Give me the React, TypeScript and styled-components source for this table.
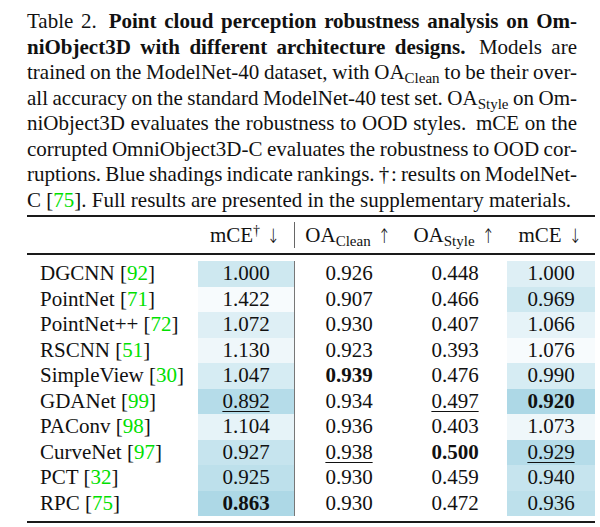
import { createGlobalStyle, styled } from 'styled-components';

const GlobalStyle = createGlobalStyle`
    body {
        margin: 0;
        background: #fff;
        color: #111;
        font-family: "Liberation Serif", "Times New Roman", serif;
    }
`;

type Row = { name: string; cite: string; vals: number[] };

const rows: Row[] = [
    { name: 'DGCNN', cite: '92', vals: [1.0, 0.926, 0.448, 1.0] },
    { name: 'PointNet', cite: '71', vals: [1.422, 0.907, 0.466, 0.969] },
    { name: 'PointNet++', cite: '72', vals: [1.072, 0.93, 0.407, 1.066] },
    { name: 'RSCNN', cite: '51', vals: [1.13, 0.923, 0.393, 1.076] },
    { name: 'SimpleView', cite: '30', vals: [1.047, 0.939, 0.476, 0.99] },
    { name: 'GDANet', cite: '99', vals: [0.892, 0.934, 0.497, 0.92] },
    { name: 'PAConv', cite: '98', vals: [1.104, 0.936, 0.403, 1.073] },
    { name: 'CurveNet', cite: '97', vals: [0.927, 0.938, 0.5, 0.929] },
    { name: 'PCT', cite: '32', vals: [0.925, 0.93, 0.459, 0.94] },
    { name: 'RPC', cite: '75', vals: [0.863, 0.93, 0.472, 0.936] },
];

// lower is better for the mCE columns, higher for the OA ones
const lowerBetter = [true, false, false, true];
const shaded = [true, false, false, true];

function rankOf(col: number, v: number) {
    const sorted = rows.map((r) => r.vals[col]).sort((a, b) => (lowerBetter[col] ? a - b : b - a));
    return sorted.indexOf(v) + 1;
}

function shade(rank: number) {
    const a = (11 - rank) / 10;
    const r = Math.round(255 - 82 * a);
    const g = Math.round(255 - 39 * a);
    const b = Math.round(255 - 25 * a);
    return `rgb(${r}, ${g}, ${b})`;
}

export default function App() {
    return (
        <>
            <GlobalStyle />
            <Page>
                <Caption>
                    <Line>
                        Table 2.<Gap /> <b>Point cloud perception robustness analysis on Om-</b>
                    </Line>
                    <Line>
                        <b>niObject3D with different architecture designs.</b>
                        <Gap /> Models are
                    </Line>
                    <Line>
                        trained on the ModelNet-40 dataset, with OA<Sub>Clean</Sub> to be their over-
                    </Line>
                    <Line>
                        all accuracy on the standard ModelNet-40 test set. OA<Sub>Style</Sub> on Om-
                    </Line>
                    <Line>niObject3D evaluates the robustness to OOD styles.<Gap /> mCE on the</Line>
                    <Line>corrupted OmniObject3D-C evaluates the robustness to OOD cor-</Line>
                    <Line>ruptions. Blue shadings indicate rankings. †: results on ModelNet-</Line>
                    <Line $last>
                        C [<Cite>75</Cite>]. Full results are presented in the supplementary materials.
                    </Line>
                </Caption>

                <Table>
                    <HeadRow>
                        <HeadCell />
                        <HeadCell $rule>
                            mCE<Sup>†</Sup> <Arrow>↓</Arrow>
                        </HeadCell>
                        <HeadCell>
                            OA<Sub>Clean</Sub> <Arrow>↑</Arrow>
                        </HeadCell>
                        <HeadCell>
                            OA<Sub>Style</Sub> <Arrow>↑</Arrow>
                        </HeadCell>
                        <HeadCell>
                            mCE <Arrow>↓</Arrow>
                        </HeadCell>
                    </HeadRow>
                    <Body>
                        {rows.map((row) => (
                            <BodyRow key={row.name}>
                                <Name>
                                    {row.name} [<Cite>{row.cite}</Cite>]
                                </Name>
                                {row.vals.map((v, i) => {
                                    const rank = rankOf(i, v);
                                    return (
                                        <Value
                                            key={i}
                                            $bg={shaded[i] ? shade(rank) : 'transparent'}
                                            $rule={i === 0}
                                        >
                                            <Num $bold={rank === 1} $under={rank === 2}>
                                                {v.toFixed(3)}
                                            </Num>
                                        </Value>
                                    );
                                })}
                            </BodyRow>
                        ))}
                    </Body>
                </Table>
            </Page>
        </>
    );
}

const Page = styled.div`
    width: 600px;
    padding-top: 9px;
`;

const Caption = styled.div`
    width: 550px;
    margin-left: 27px;
    font-size: 21px;
    line-height: 25.5px;

    b {
        font-weight: 700;
    }
`;

const Line = styled.div<{ $last?: boolean }>`
    text-align: ${(p) => (p.$last ? 'left' : 'justify')};
    text-align-last: ${(p) => (p.$last ? 'left' : 'justify')};
    word-spacing: ${(p) => (p.$last ? '0' : '-3px')};
    white-space: ${(p) => (p.$last ? 'nowrap' : 'normal')};
`;

const Gap = styled.span`
    display: inline-block;
    width: 4px;
`;

const Sub = styled.span`
    font-size: 15px;
    vertical-align: -4px;
    line-height: 0;
`;

const Sup = styled.span`
    font-size: 14px;
    vertical-align: 7px;
    line-height: 0;
`;

const Arrow = styled.span`
    display: inline-block;
    font-family: "DejaVu Sans", sans-serif;
    font-weight: 200;
    font-size: 20px;
    line-height: 0;
    transform: scaleX(0.75) translateY(1px);
`;

const Cite = styled.span`
    color: #00e000;
`;

const Table = styled.div`
    margin: 2px 0 0 27px;
    width: 568px;
    font-size: 21px;
    border-top: 2px solid #1a1a1a;
    border-bottom: 2px solid #1a1a1a;
`;

const columns = '171px 97px 108px 104px 88px';

const HeadRow = styled.div`
    display: grid;
    grid-template-columns: ${columns};
    align-items: center;
    height: 36px;
    border-bottom: 2px solid #1a1a1a;
`;

const HeadCell = styled.div<{ $rule?: boolean }>`
    height: 26px;
    line-height: 26px;
    text-align: center;
    white-space: nowrap;
    border-right: ${(p) => (p.$rule ? '1.5px solid #666' : 'none')};
`;

const Body = styled.div`
    padding: 6px 0 5px;
`;

const BodyRow = styled.div`
    display: grid;
    grid-template-columns: ${columns};
    height: 25.5px;
    line-height: 25.5px;
`;

const Name = styled.div`
    padding-left: 13px;
    white-space: nowrap;
`;

const Value = styled.div<{ $bg: string; $rule?: boolean }>`
    text-align: center;
    background: ${(p) => p.$bg};
    border-right: ${(p) => (p.$rule ? '1.5px solid #777' : 'none')};
`;

const Num = styled.span<{ $bold?: boolean; $under?: boolean }>`
    font-weight: ${(p) => (p.$bold ? 700 : 400)};
    text-decoration: ${(p) => (p.$under ? 'underline' : 'none')};
    text-decoration-thickness: 1px;
    text-underline-offset: 3px;
`;
